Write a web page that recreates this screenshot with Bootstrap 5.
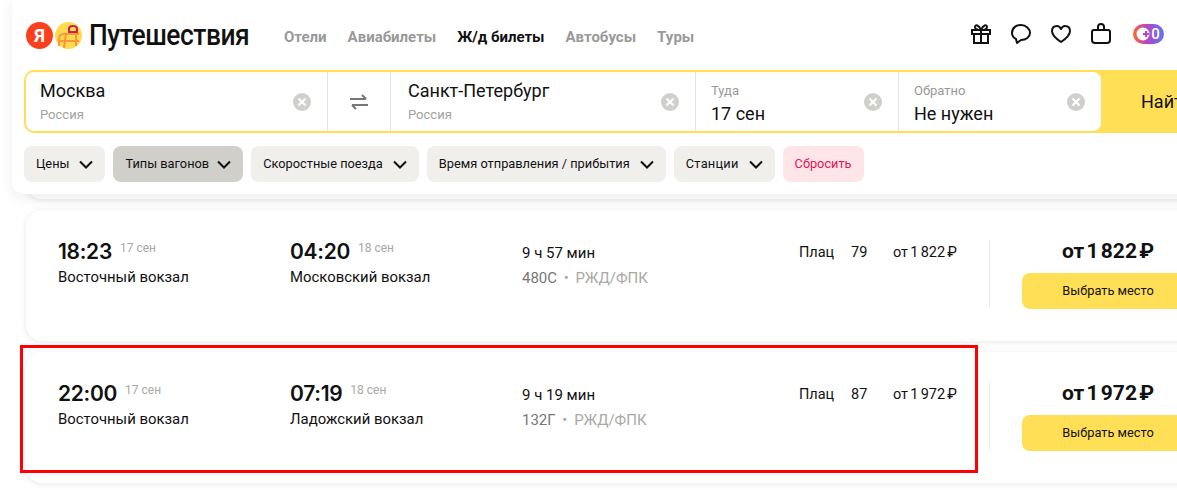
<!DOCTYPE html>
<html lang="ru">
<head>
  <meta charset="UTF-8" />
  <title>Яндекс Путешествия</title>
  <link href="https://cdn.jsdelivr.net/npm/bootstrap@5.3.3/dist/css/bootstrap.min.css" rel="stylesheet" />
  <style>
    body {
      width: 1177px;
      height: 494px;
      overflow: hidden;
      position: relative;
      background: #fff;
      font-family: Roboto, "Liberation Sans", sans-serif;
      color: #111;
    }

    .page-wrap { width: 1260px; }

    .search-panel {
      position: relative;
      z-index: 2;
      margin-left: 12px;
      padding: 0 0 12px 12px;
      background: #fff;
      border-radius: 0 0 12px 12px;
      box-shadow: 0 4px 14px rgba(0, 0, 0, 0.07);
    }

    .top-bar { height: 70px; padding-left: 2px; }

    .brand-name {
      font-family: Roboto, sans-serif;
      font-size: 29px;
      font-weight: 500;
      letter-spacing: -0.5px;
      margin-left: 7px;
      line-height: 1;
      transform: scaleX(0.91);
      transform-origin: left;
      width: 160px;
      white-space: nowrap;
    }

    .logo-ya {
      width: 27px;
      height: 27px;
      border-radius: 50%;
      background: #fc3f1d;
      color: #fff;
      font-size: 18px;
      font-weight: 700;
      line-height: 27px;
      text-align: center;
    }
    .logo-bag { margin-left: 2px; }

    .top-links { margin-left: 35px; margin-top: 4px; gap: 21px; font-size: 15px; font-weight: 700; color: #999; font-family: Roboto, sans-serif; }
    .top-links .on { color: #111; }

    .top-icons { margin-left: 276px; margin-top: -2px; height: 26px; gap: 18px; }
    .top-icons svg { flex: none; }

    .plus-badge {
      width: 31px;
      height: 20px;
      margin-left: 3px;
      border-radius: 10px;
      background: linear-gradient(90deg, #ff6a2a, #b843c9 45%, #5a7bf0);
      color: #fff;
      font-size: 15px;
      font-weight: 500;
      line-height: 20px;
      padding-left: 3px;
    }

    .search-form {
      height: 63px;
      border: 2px solid #ffdf56;
      border-radius: 10px;
      background: #ffdf56;
      margin-bottom: 13px;
    }

    .form-cell {
      height: 100%;
      background: #fff;
      padding: 0 14px;
      border-right: 1px solid #e4e4e2;
    }
    .form-cell:first-child { border-radius: 8px 0 0 8px; }
    .cell-city { width: 302px; }
    .cell-swap { width: 63px; }
    .cell-city-to { width: 305px; padding-left: 17px; }
    .cell-date { width: 203px; padding-left: 15px; }
    .cell-back { width: 202px; padding-left: 15px; border-right: 0; border-radius: 0 8px 8px 0; }

    .city-name { font-size: 18px; line-height: 22px; }
    .city-sub { font-size: 13px; color: #a3a39f; line-height: 16px; margin-top: 5px; }
    .date-text { padding-top: 5px; }
    .date-label { font-size: 13px; color: #999; line-height: 16px; }
    .date-value { font-size: 18px; line-height: 22px; margin-top: 4px; }

    .clear-x { flex: none; margin-right: 2px; }

    .find-btn {
      padding-left: 40px;
      font-size: 18px;
      white-space: nowrap;
    }

    .filter-chip {
      height: 36px;
      padding: 0 12px;
      border-radius: 8px;
      background: #f0efec;
      font-size: 12.8px;
      gap: 10px;
      white-space: nowrap;
    }
    .filter-chip.active { background: #d0cfca; gap: 8px; }
    .filter-chip.reset { background: #fde5ea; color: #e5174f; }
    .chip-stations { letter-spacing: 0.25px; }

    .hidden-card {
      height: 16px;
      margin: -11px 0 11px 26px;
      background: #fff;
      border-radius: 0 0 16px 16px;
      box-shadow: 0 1px 6px rgba(0, 0, 0, 0.1);
    }

    .trip-card {
      height: 131px;
      margin: 0 0 11px 26px;
      padding: 29px 0 0 32px;
      background: #fff;
      border-radius: 16px;
      box-shadow: 0 1px 6px rgba(0, 0, 0, 0.1);
    }

    .col-stop { width: 232px; }
    .stop-time { font-family: Inter, sans-serif; font-size: 21px; font-weight: 600; line-height: 26px; letter-spacing: -0.3px; }
    .stop-date { font-size: 12px; color: #a9a9a5; margin-left: 8px; position: relative; top: -7px; }
    .stop-name { font-size: 14.9px; line-height: 20px; margin-top: 1px; }
    .col-route { width: 277px; font-size: 15px; padding-top: 4px; }
    .route-train { color: #777; line-height: 20px; margin-top: 5px; }
    .route-train span { color: #a9a9a5; margin-left: 3px; }
    .route-line { line-height: 20px; }

    .col-seats { width: 190px; font-size: 14.5px; padding-top: 4px; height: 20px; line-height: 20px; }
    .seat-type { width: 52px; }
    .seat-count { width: 42px; }
    .seat-price { white-space: nowrap; word-spacing: -1.4px; }

    .col-buy {
      margin-left: 0;
      padding-left: 32px;
      border-left: 1px solid #eaeae8;
      height: 68px;
      margin-top: 1px;
      width: 205px;
    }
    .buy-price { width: 172px; font-size: 21px; font-weight: 700; line-height: 22px; text-align: center; font-family: Roboto, sans-serif; white-space: nowrap; word-spacing: -3px; }
    .buy-btn {
      width: 172px;
      height: 36px;
      margin-top: 11px;
      border: 0;
      border-radius: 8px;
      background: #ffdf56;
      color: #111;
      font-size: 12.8px;
      padding: 0;
    }
    .buy-btn:hover { background: #ffd633; color: #111; }

    .red-frame {
      position: absolute;
      left: 20px;
      top: 345px;
      width: 958px;
      height: 128px;
      border: 3px solid #f00;
      z-index: 3;
      pointer-events: none;
    }
  </style>
</head>
<body>
  <div class="page-wrap">
    <!-- Header and search -->
    <div class="search-panel">
      <div class="top-bar d-flex align-items-center">
        <div class="logo-ya">Я</div>
        <svg width="27" height="27" viewBox="0 0 27 27" class="logo-bag">
          <circle cx="13.5" cy="13.5" r="13.5" fill="#ffdb4d"/>
          <path d="M4 24V17Q4 12 9 12H24" stroke="#ff9440" stroke-width="2" fill="none"/>
          <path d="M4 19H24M11 12L9 26M21 12V24" stroke="#ff9440" stroke-width="2" fill="none"/>
          <path d="M14 10V7Q14 4 18 4Q22 4 22 7V10M13 10H23" stroke="#c2264f" stroke-width="2.200" fill="none"/>
        </svg>
        <div class="brand-name">Путешествия</div>
        <div class="top-links d-flex">
          <span>Отели</span><span>Авиабилеты</span><span class="on">Ж/д билеты</span><span>Автобусы</span><span>Туры</span>
        </div>
        <div class="top-icons d-flex align-items-center flex-shrink-0">
          <svg width="22" height="22" viewBox="0 0 22 22" fill="none" stroke="#111" stroke-width="2">
            <rect x="2" y="7" width="18" height="4"/><path d="M4 11v9h14v-9M11 7v13M11 7C9 2 5 1 5 4c0 2 3 3 6 3zM11 7c2-5 6-6 6-3 0 2-3 3-6 3z"/>
          </svg>
          <svg width="22" height="22" viewBox="0 0 22 22" fill="none" stroke="#111" stroke-width="2">
            <path d="M11 2C6 2 2 5 2 10c0 3 2 5 4 6l1 4 4-3c5 0 9-3 9-7s-4-8-9-8z" stroke-linejoin="round"/>
          </svg>
          <svg width="22" height="22" viewBox="0 0 22 22" fill="none" stroke="#111" stroke-width="2">
            <path d="M11 19C5 15 2 12 2 8c0-3 2-5 5-5 2 0 3 1 4 3 1-2 2-3 4-3 3 0 5 2 5 5 0 4-3 7-9 11z" stroke-linejoin="round"/>
          </svg>
          <svg width="22" height="22" viewBox="0 0 22 22" fill="none" stroke="#111" stroke-width="2">
            <path d="M4 7h14a2 2 0 0 1 2 2v8a3 3 0 0 1-3 3H5a3 3 0 0 1-3-3V9a2 2 0 0 1 2-2zM8 7V4a3 3 0 0 1 6 0v3" stroke-linejoin="round"/>
          </svg>
          <div class="plus-badge d-flex align-items-center flex-shrink-0">
            <svg width="15" height="14" viewBox="0 0 15 14"><circle cx="7" cy="7" r="6.500" fill="#fff"/><path d="M7 7h6M10 4v6" stroke="#b843c9" stroke-width="2"/></svg>
            <span>0</span>
          </div>
        </div>
      </div>

      <div class="search-form d-flex">
        <div class="form-cell cell-city d-flex align-items-center justify-content-between">
          <div>
            <div class="city-name">Москва</div>
            <div class="city-sub">Россия</div>
          </div>
          <svg class="clear-x" width="18" height="18" viewBox="0 0 18 18"><circle cx="9" cy="9" r="9" fill="#cfcfcb"/><path d="M5.500 5.500l7 7M12.500 5.500l-7 7" stroke="#fff" stroke-width="2.200"/></svg>
        </div>
        <div class="form-cell cell-swap d-flex align-items-center justify-content-center">
          <svg width="18" height="16" viewBox="0 0 18 16" fill="none" stroke="#777" stroke-width="2"><path d="M0 5h16M12 1l4 4"/><path d="M18 11H2M6 15l-4-4"/></svg>
        </div>
        <div class="form-cell cell-city-to d-flex align-items-center justify-content-between">
          <div>
            <div class="city-name">Санкт-Петербург</div>
            <div class="city-sub">Россия</div>
          </div>
          <svg class="clear-x" width="18" height="18" viewBox="0 0 18 18"><circle cx="9" cy="9" r="9" fill="#cfcfcb"/><path d="M5.500 5.500l7 7M12.500 5.500l-7 7" stroke="#fff" stroke-width="2.200"/></svg>
        </div>
        <div class="form-cell cell-date d-flex align-items-center justify-content-between">
          <div class="date-text">
            <div class="date-label">Туда</div>
            <div class="date-value">17 сен</div>
          </div>
          <svg class="clear-x" width="18" height="18" viewBox="0 0 18 18"><circle cx="9" cy="9" r="9" fill="#cfcfcb"/><path d="M5.500 5.500l7 7M12.500 5.500l-7 7" stroke="#fff" stroke-width="2.200"/></svg>
        </div>
        <div class="form-cell cell-back d-flex align-items-center justify-content-between">
          <div class="date-text">
            <div class="date-label">Обратно</div>
            <div class="date-value">Не нужен</div>
          </div>
          <svg class="clear-x" width="18" height="18" viewBox="0 0 18 18"><circle cx="9" cy="9" r="9" fill="#cfcfcb"/><path d="M5.500 5.500l7 7M12.500 5.500l-7 7" stroke="#fff" stroke-width="2.200"/></svg>
        </div>
        <div class="find-btn d-flex align-items-center">Найти</div>
      </div>

      <div class="d-flex gap-2">
        <div class="filter-chip d-flex align-items-center">Цены <svg width="14" height="9" viewBox="0 0 14 9" fill="none" stroke="#111" stroke-width="2"><path d="M1 1.500l6 6 6-6"/></svg></div>
        <div class="filter-chip active d-flex align-items-center">Типы вагонов <svg width="14" height="9" viewBox="0 0 14 9" fill="none" stroke="#111" stroke-width="2"><path d="M1 1.500l6 6 6-6"/></svg></div>
        <div class="filter-chip d-flex align-items-center">Скоростные поезда <svg width="14" height="9" viewBox="0 0 14 9" fill="none" stroke="#111" stroke-width="2"><path d="M1 1.500l6 6 6-6"/></svg></div>
        <div class="filter-chip d-flex align-items-center">Время отправления / прибытия <svg width="14" height="9" viewBox="0 0 14 9" fill="none" stroke="#111" stroke-width="2"><path d="M1 1.500l6 6 6-6"/></svg></div>
        <div class="filter-chip chip-stations d-flex align-items-center">Станции <svg width="14" height="9" viewBox="0 0 14 9" fill="none" stroke="#111" stroke-width="2"><path d="M1 1.500l6 6 6-6"/></svg></div>
        <div class="filter-chip reset d-flex align-items-center">Сбросить</div>
      </div>
    </div>

    <!-- Results -->
    <div class="hidden-card"></div>

    <div class="trip-card d-flex">
      <div class="col-stop">
        <div><span class="stop-time">18:23</span><span class="stop-date">17 сен</span></div>
        <div class="stop-name">Восточный вокзал</div>
      </div>
      <div class="col-stop">
        <div><span class="stop-time">04:20</span><span class="stop-date">18 сен</span></div>
        <div class="stop-name">Московский вокзал</div>
      </div>
      <div class="col-route">
        <div class="route-line">9 ч 57 мин</div>
        <div class="route-train">480С <span>•</span> <span>РЖД/ФПК</span></div>
      </div>
      <div class="col-seats d-flex">
        <div class="seat-type">Плац</div><div class="seat-count">79</div><div class="seat-price">от 1 822 ₽</div>
      </div>
      <div class="col-buy">
        <div class="buy-price">от 1 822 ₽</div>
        <button class="btn buy-btn">Выбрать место</button>
      </div>
    </div>

    <div class="trip-card d-flex">
      <div class="col-stop">
        <div><span class="stop-time">22:00</span><span class="stop-date">17 сен</span></div>
        <div class="stop-name">Восточный вокзал</div>
      </div>
      <div class="col-stop">
        <div><span class="stop-time">07:19</span><span class="stop-date">18 сен</span></div>
        <div class="stop-name">Ладожский вокзал</div>
      </div>
      <div class="col-route">
        <div class="route-line">9 ч 19 мин</div>
        <div class="route-train">132Г <span>•</span> <span>РЖД/ФПК</span></div>
      </div>
      <div class="col-seats d-flex">
        <div class="seat-type">Плац</div><div class="seat-count">87</div><div class="seat-price">от 1 972 ₽</div>
      </div>
      <div class="col-buy">
        <div class="buy-price">от 1 972 ₽</div>
        <button class="btn buy-btn">Выбрать место</button>
      </div>
    </div>
  </div>

  <div class="red-frame"></div>

  <script src="https://cdn.jsdelivr.net/npm/bootstrap@5.3.3/dist/js/bootstrap.bundle.min.js"></script>
</body>
</html>
